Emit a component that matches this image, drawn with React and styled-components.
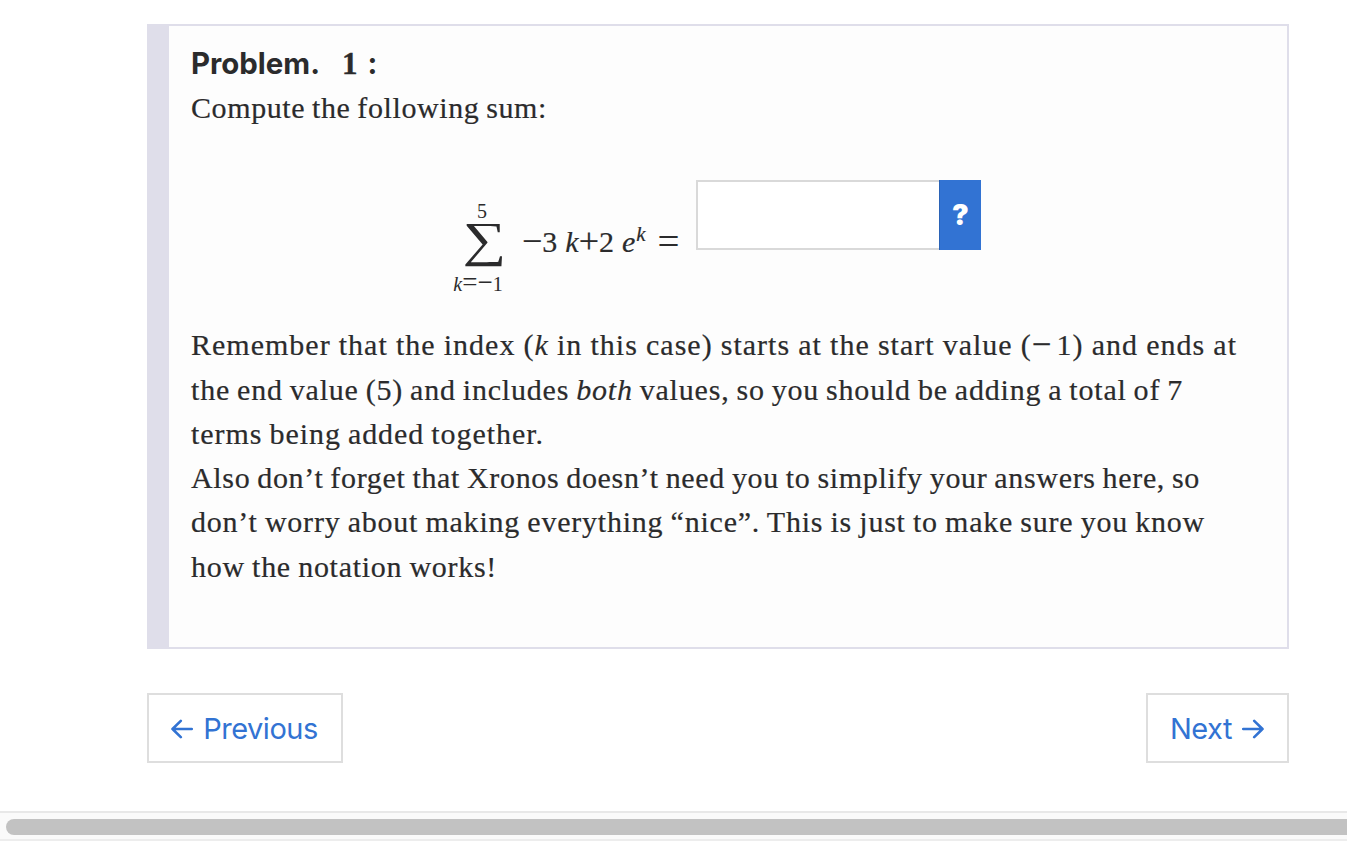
import React from 'react'
import styled, { createGlobalStyle } from 'styled-components'

function App() {
    return (
        <>
            <GlobalStyle />
            <Page>
                <Card>
                    <Heading>
                        Problem. <HeadingNumber>1</HeadingNumber> <HeadingColon>:</HeadingColon>
                    </Heading>
                    <Line $width={356} $spacing={0.6}>Compute the following sum:</Line>

                    <Formula>
                        <Sum>
                            <Limit>5</Limit>
                            <Sigma>∑</Sigma>
                            <LowerLimit>
                                <Variable>k</Variable>
                                <SmallOperator>=−</SmallOperator>1
                            </LowerLimit>
                        </Sum>
                        <Expression>
                            <Operator>−</Operator>
                            <span>3</span>
                            <Variable>k</Variable>
                            <Operator>+</Operator>
                            <span>2</span>
                            <Variable>e</Variable>
                            <Exponent>k</Exponent>
                            <Equals>=</Equals>
                        </Expression>
                        <Answer>
                            <AnswerInput />
                            <AnswerButton>?</AnswerButton>
                        </Answer>
                    </Formula>

                    <Line $width={1046} $spacing={1}>
                        Remember that the index (<Variable>k</Variable> in this case) starts at the start value (<Minus>−</Minus>1) and ends at
                    </Line>
                    <Line $width={992} $spacing={0.81}>
                        the end value (5) and includes <Variable>both</Variable> values, so you should be adding a total of 7
                    </Line>
                    <Line $width={353} $spacing={0.95}>terms being added together.</Line>
                    <Line $width={1009} $spacing={0.66}>
                        Also don’t forget that Xronos doesn’t need you to simplify your answers here, so
                    </Line>
                    <Line $width={1014} $spacing={0.78}>
                        don’t worry about making everything “nice”. This is just to make sure you know
                    </Line>
                    <Line $width={306} $spacing={0.7}>how the notation works!</Line>
                </Card>

                <Pager>
                    <PagerButton $width={196}>
                        <ArrowIcon $flip viewBox="0 0 22 20">
                            <path d="M1.2 10H20.5M12.2 1.8L20.5 10L12.2 18.2" />
                        </ArrowIcon>
                        Previous
                    </PagerButton>
                    <PagerButton $width={143}>
                        Next
                        <ArrowIcon viewBox="0 0 22 20">
                            <path d="M1.2 10H20.5M12.2 1.8L20.5 10L12.2 18.2" />
                        </ArrowIcon>
                    </PagerButton>
                </Pager>

                <ScrollTrack>
                    <ScrollThumb />
                </ScrollTrack>
            </Page>
        </>
    )
}

export default App

const GlobalStyle = createGlobalStyle`
  * {
    box-sizing: border-box;
  }

  body {
    margin: 0;
    background-color: white;
    overflow: hidden;
  }
`

const Page = styled.div`
  display: flex;
  flex-direction: column;
  width: 1347px;
  height: 841px;
  padding-top: 24px;
  overflow: hidden;
  color: #2b2b2c;
  font-family: "Liberation Serif", serif;
  font-size: 30px;
`

const Card = styled.section`
  width: 1142px;
  height: 625px;
  margin-left: 147px;
  padding: 16px 20px 0 22px;
  background-color: #fdfdfd;
  border: 2px solid #dfdeea;
  border-left-width: 22px;
`

const Heading = styled.h4`
  display: flex;
  align-items: baseline;
  height: 44px;
  margin: 0;
  font-family: Inter, sans-serif;
  font-size: 29.4px;
  font-weight: 700;
  line-height: 44px;
`

const HeadingNumber = styled.span`
  margin-left: 22px;
  font-family: "Liberation Serif", serif;
  font-size: 31px;
  -webkit-text-stroke: 0.4px;
`

const HeadingColon = styled.span`
  margin-left: 10px;
`

const Line = styled.div`
  width: ${(props) => props.$width}px;
  height: 44.25px;
  line-height: 44.25px;
  letter-spacing: ${(props) => props.$spacing}px;
  word-spacing: -1.5px;
  white-space: nowrap;
  text-align: justify;
  text-align-last: justify;
  -webkit-text-stroke: 0.2px;
`

const Variable = styled.i`
  font-style: italic;
`

const Minus = styled.span`
  margin-right: 4px;
  font-size: 35px;
  line-height: 1;
  vertical-align: -1px;
`

const Formula = styled.div`
  display: flex;
  align-items: flex-start;
  height: 193px;
  padding: 49.75px 0 0 257px;
`

const Sum = styled.div`
  display: flex;
  flex-direction: column;
  align-items: center;
  width: 60px;
  margin-top: 20px;
`

const Limit = styled.div`
  height: 23px;
  margin-left: 8px;
  font-size: 20px;
  line-height: 22px;
`

const Sigma = styled.div`
  height: 47px;
  margin-left: 12px;
  font-size: 49px;
  line-height: 33px;
  transform: scaleX(1.25);
`

const LowerLimit = styled.div`
  display: flex;
  align-items: baseline;
  height: 24px;
  font-size: 20px;
  line-height: 24px;
  white-space: nowrap;
`

const SmallOperator = styled.span`
  font-size: 27px;
`

const Operator = styled.span`
  margin-bottom: -2px;
  font-size: 36px;
  transform: translateY(1px);
`

const Expression = styled.div`
  display: flex;
  align-items: baseline;
  width: 188px;
  margin-top: 37px;
  padding-left: 14px;
  line-height: 44px;
  -webkit-text-stroke: 0.2px;

  > ${Variable} {
    margin-left: 8px;
  }
`

const Exponent = styled.i`
  align-self: flex-start;
  margin: -5px 0 0 1px;
  font-size: 21px;
`

const Equals = styled.span`
  margin-left: 12px;
  font-size: 39px;
  transform: translateY(3px);
  -webkit-text-stroke: 0;
`

const Answer = styled.div`
  display: flex;
  width: 285px;
  height: 70px;
`

const AnswerInput = styled.input`
  width: 243px;
  height: 70px;
  padding: 0 12px;
  background-color: white;
  border: 2px solid #d9d9d9;
  border-right: 0;
  border-radius: 0;
  font: inherit;
`

const AnswerButton = styled.button`
  width: 42px;
  padding: 0;
  color: white;
  background-color: #3273d3;
  border: 0;
  border-left: 1px solid #2b63b6;
  font-family: Inter, sans-serif;
  font-size: 28px;
  font-weight: 900;
`

const Pager = styled.nav`
  display: flex;
  justify-content: space-between;
  width: 1142px;
  margin: 43.5px 0 0 147px;
`

const PagerButton = styled.button`
  display: flex;
  align-items: center;
  justify-content: center;
  gap: 10px;
  width: ${(props) => props.$width}px;
  height: 70px;
  padding: 2px 1px 0 0;
  color: #3273d3;
  background-color: white;
  border: 2px solid #dedede;
  font-family: Inter, sans-serif;
  font-size: 29px;
  letter-spacing: -0.5px;
`

const ArrowIcon = styled.svg`
  width: 22px;
  height: 20px;
  fill: none;
  stroke: currentColor;
  stroke-width: 2.6;
  stroke-linecap: round;
  stroke-linejoin: round;
  transform: ${(props) => (props.$flip ? 'scaleX(-1)' : 'none')};
`

const ScrollTrack = styled.div`
  height: 30px;
  margin-top: auto;
  padding: 6px 0 0 6px;
  background-color: #fafafa;
  border-top: 2px solid #e8e8e8;
  border-bottom: 2px solid #ededed;
`

const ScrollThumb = styled.div`
  height: 16px;
  background-color: #c2c2c2;
  border-radius: 8px 0 0 8px;
`
